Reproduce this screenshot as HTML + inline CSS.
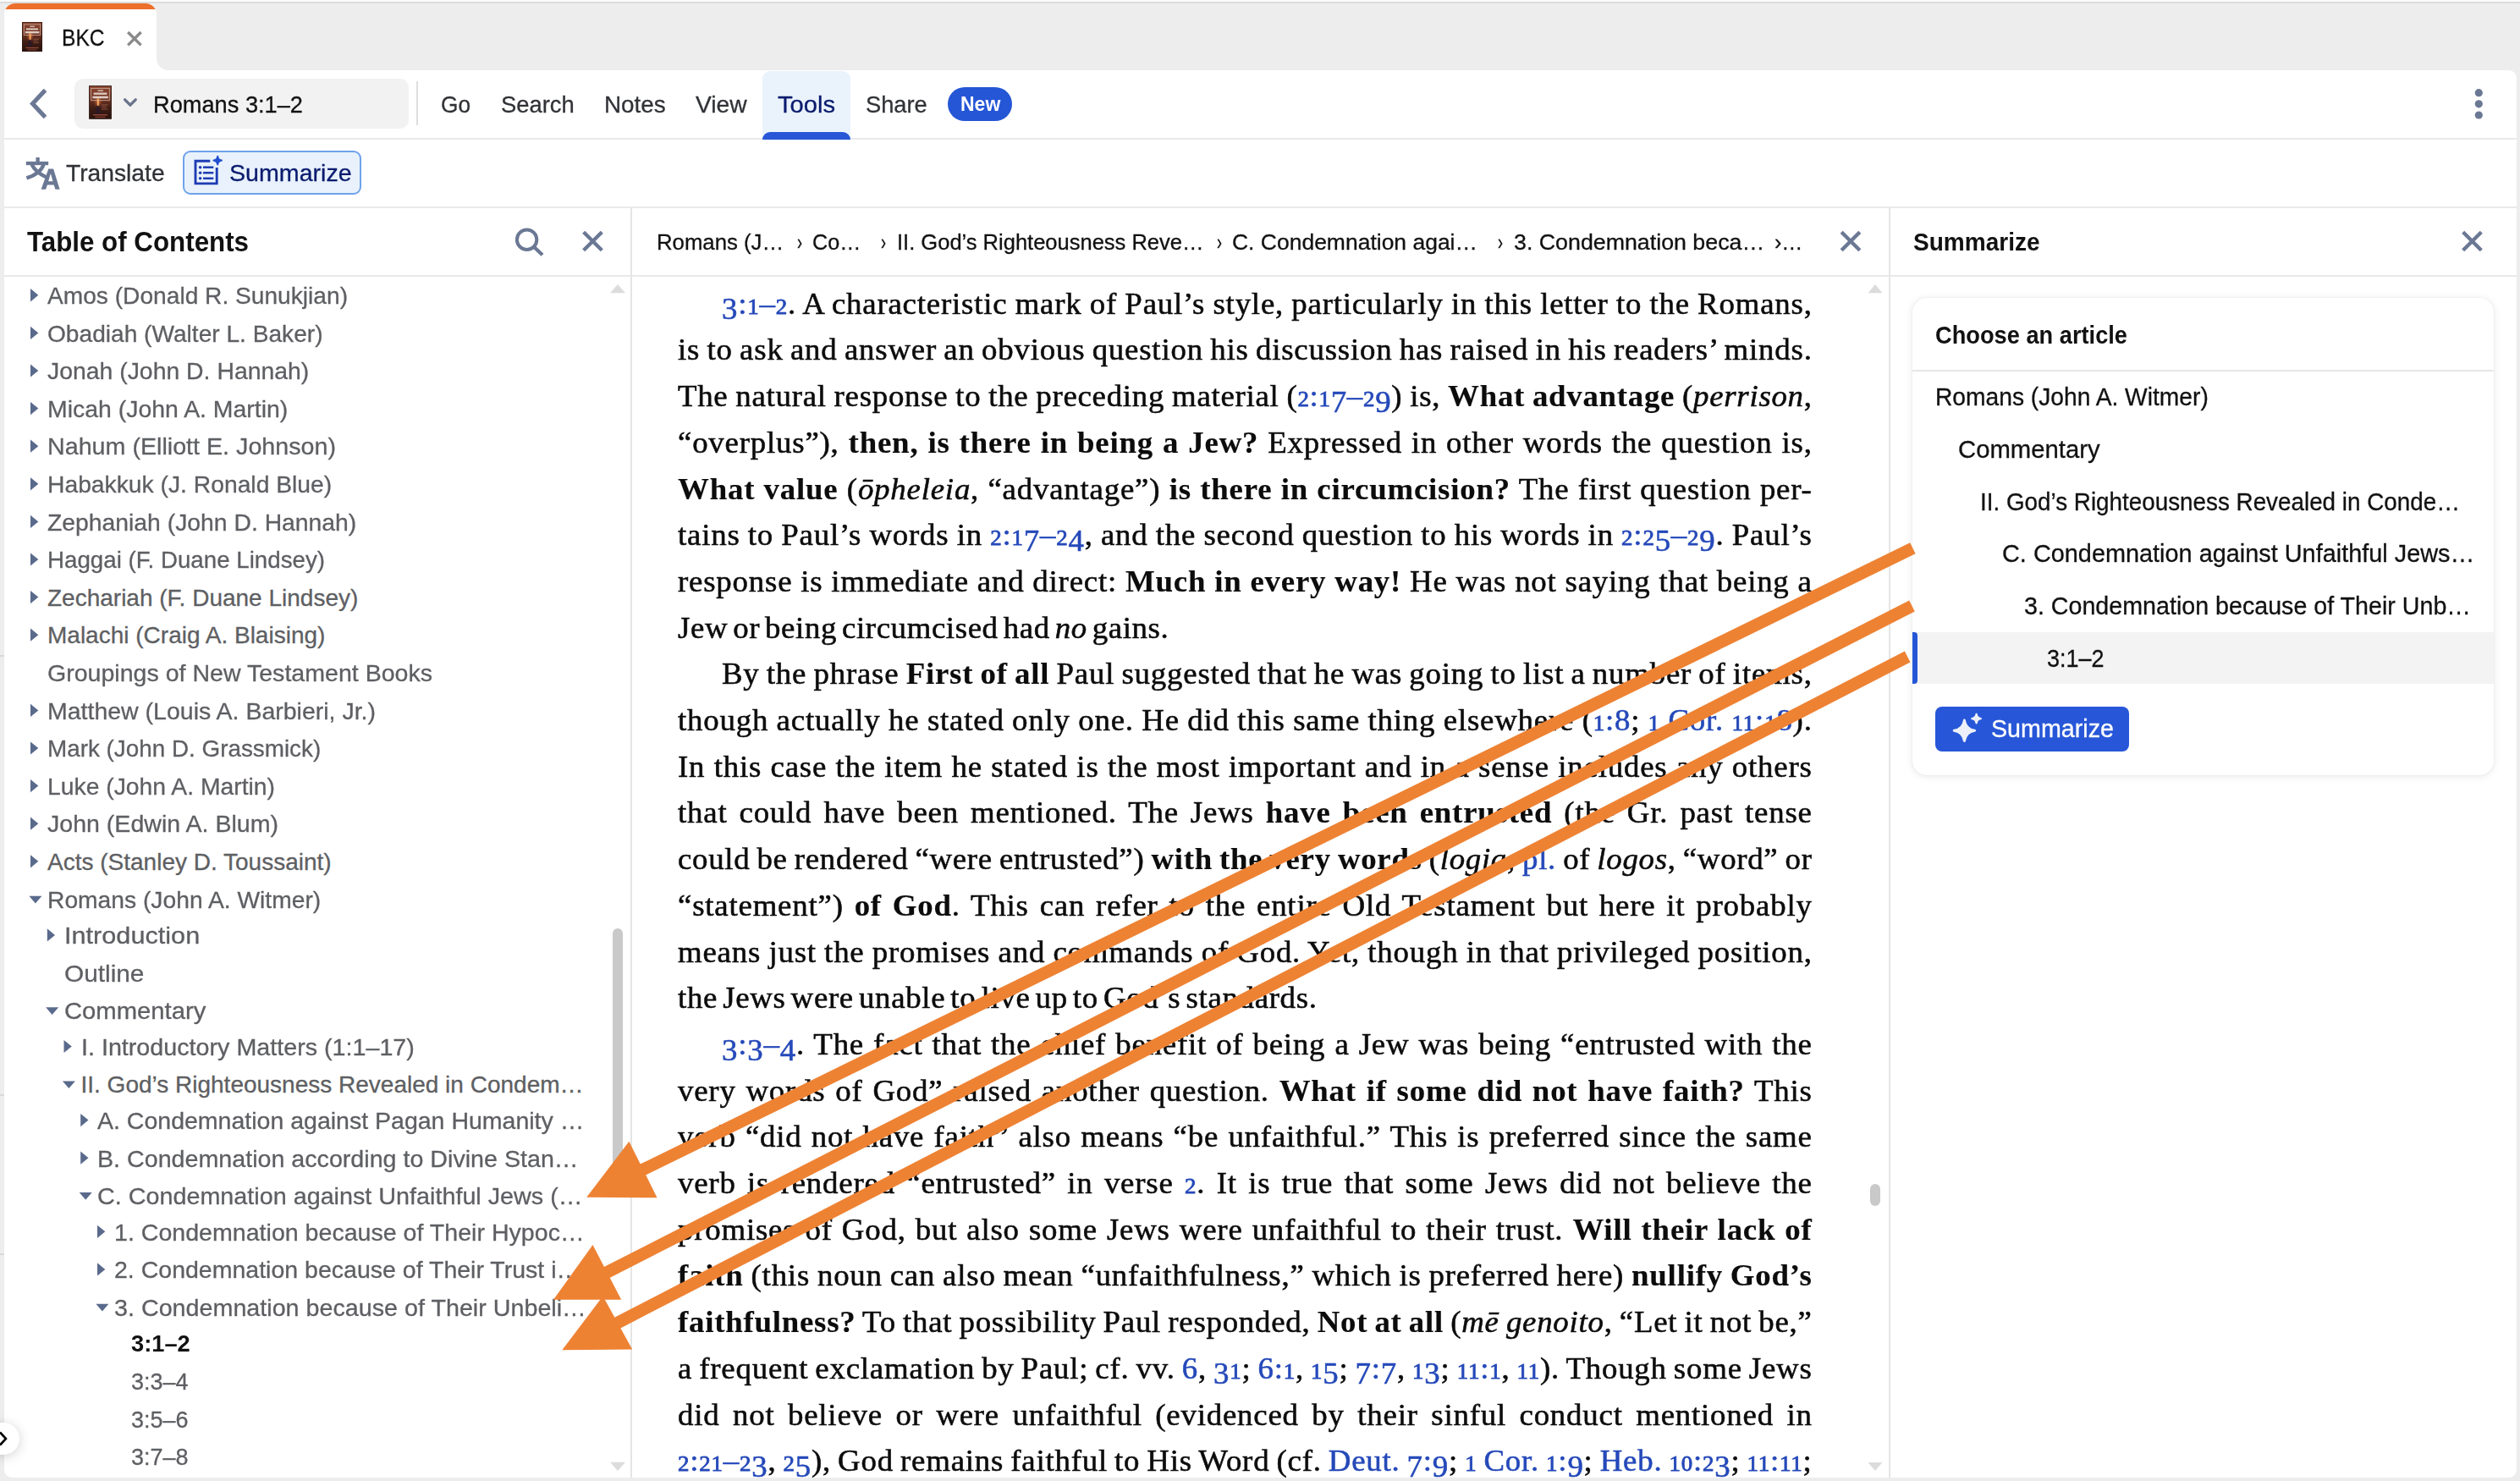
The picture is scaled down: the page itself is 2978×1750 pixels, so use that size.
<!DOCTYPE html><html><head><meta charset="utf-8"><title>BKC</title><style>

*{box-sizing:border-box;margin:0;padding:0}
html,body{width:2978px;height:1750px;overflow:hidden;background:#ededed;font-family:"Liberation Sans",sans-serif}
.abs{position:absolute}
.t{position:absolute;white-space:pre;line-height:1;transform-origin:0 0;-webkit-text-stroke:0.3px currentColor}
.t.b{-webkit-text-stroke:0}
.ln{position:absolute;white-space:nowrap;line-height:1;font-family:"Liberation Serif",serif;color:#0c0c0c;transform-origin:0 0;text-align:justify;text-align-last:justify;-webkit-text-stroke:0.55px currentColor}
.ln.last{text-align:left;text-align-last:left}
.ln a{color:#2549b9}
.ln .s{font-size:0.73em;-webkit-text-stroke:0.8px currentColor}
.ln .p{position:relative;top:0.19em}
.ln b{font-weight:700;-webkit-text-stroke:0.15px currentColor}
svg{position:absolute;left:0;top:0;overflow:visible}

#root{position:absolute;left:0;top:0;width:2978px;height:1750px;overflow:hidden;background:#ededed}
</style></head><body><div id="root">
<div class="abs" style="left:0;top:0;width:2978px;height:2px;background:#fbfbfb"></div>
<div class="abs" style="left:0;top:2px;width:2978px;height:2px;background:#dcdcdc"></div>
<div class="abs" style="left:5px;top:82.5px;width:2969px;height:1663.5px;background:#fff;border-radius:0 9px 9px 9px"></div>
<div class="abs" style="left:5px;top:4px;width:180px;height:80px;background:#fff;border-radius:13px 13px 0 0;overflow:hidden"><div style="height:7px;background:#ec6f2b"></div></div>
<div class="abs" style="left:185px;top:69px;width:14px;height:14px;background:radial-gradient(circle at 100% 0,#ededed 13.5px,#fff 14.5px)"></div>
<div class="abs" style="left:5px;top:163px;width:2969px;height:2px;background:#e9e9e9"></div>
<div class="abs" style="left:5px;top:244px;width:2969px;height:2px;background:#e9e9e9"></div>
<div class="abs" style="left:5px;top:325px;width:2969px;height:2px;background:#e9e9e9"></div>
<div class="abs" style="left:745px;top:246px;width:2px;height:1500px;background:#e5e5e5"></div>
<div class="abs" style="left:2232px;top:246px;width:2px;height:1500px;background:#e5e5e5"></div>
<div class="abs" style="left:88px;top:93px;width:395px;height:59px;background:#f2f2f2;border-radius:10px"></div>
<div class="abs" style="left:492px;top:96px;width:2px;height:52px;background:#dedede"></div>
<div class="abs" style="left:901px;top:83.5px;width:104px;height:80.5px;background:#eaf3fc;border-radius:9px 9px 0 0"></div>
<div class="abs" style="left:901px;top:156px;width:104px;height:8.8px;background:#2757d6;border-radius:9px 9px 0 0"></div>
<div class="abs" style="left:1119.5px;top:103px;width:76.5px;height:40px;background:#2456d6;border-radius:20px"></div>
<div class="abs" style="left:216px;top:178px;width:211px;height:52px;background:#e9f2fc;border:2.5px solid #6ea2ea;border-radius:9px"></div>
<div class="abs" style="left:2260px;top:352px;width:687px;height:563.5px;background:#fff;border-radius:17px;box-shadow:0 1px 10px rgba(0,0,0,.10),0 0 2px rgba(0,0,0,.06);overflow:hidden"><div class="abs" style="left:0;top:84.5px;width:687px;height:2px;background:#e6e6e6"></div><div class="abs" style="left:0;top:395px;width:687px;height:60.5px;background:#f3f3f3"></div><div class="abs" style="left:0;top:395px;width:6px;height:60.5px;background:#2456d6;border-radius:0 4px 4px 0"></div><div class="abs" style="left:27px;top:483px;width:229px;height:52.5px;background:#2757d8;border-radius:8px"></div></div>
<div class="abs" style="left:724.3px;top:1097px;width:11.5px;height:300px;background:#c9c9c9;border-radius:6px"></div>
<div class="abs" style="left:2210px;top:1398.7px;width:12px;height:26.5px;background:#c9c9c9;border-radius:6px"></div>
<div class="abs" style="left:-16px;top:1680.5px;width:38.5px;height:38.5px;background:#fff;border-radius:50%;box-shadow:0 2px 14px rgba(0,0,0,.18)"></div>
<div class="abs" style="left:0;top:774px;width:5px;height:2px;background:#d9d9d9"></div>
<div class="abs" style="left:0;top:1293px;width:5px;height:2px;background:#d9d9d9"></div>
<div class="abs" style="left:0;top:1481px;width:5px;height:2px;background:#d9d9d9"></div>
<svg width="2978" height="1750" viewBox="0 0 2978 1750"><defs><linearGradient id="bkg" x1="0" y1="0" x2="0" y2="1"><stop offset="0" stop-color="#8c4630"/><stop offset="0.42" stop-color="#6a3020"/><stop offset="0.7" stop-color="#3c1c14"/><stop offset="1" stop-color="#2c140e"/></linearGradient><radialGradient id="bkglow"><stop offset="0" stop-color="#f08a48" stop-opacity=".85"/><stop offset="1" stop-color="#b04a28" stop-opacity="0"/></radialGradient><filter id="bl" x="-10%" y="-10%" width="120%" height="120%"><feGaussianBlur stdDeviation="0.45"/></filter></defs><g transform="translate(26,26) scale(0.8889,0.8750)"><rect width="27" height="40" fill="#2b1610"/><rect x="0.8" y="0.8" width="25.4" height="38.4" fill="url(#bkg)"/><ellipse cx="10.8" cy="19" rx="5.5" ry="8" fill="url(#bkglow)"/><g filter="url(#bl)"><rect x="2.6" y="3.3" width="21.8" height="14.4" fill="none" stroke="#c7a696" stroke-width="0.9"/><rect x="10.5" y="5.2" width="6.5" height="1.7" fill="#d9c3b5" fill-opacity=".85"/><rect x="5.5" y="8.4" width="16" height="2.5" fill="#efe4dc" fill-opacity=".82"/><rect x="4.3" y="12.6" width="18.6" height="2.7" fill="#f2e9e2" fill-opacity=".85"/><rect x="9.9" y="15.6" width="1.8" height="8.2" fill="#f6b06a"/><path d="M7 33.5 L8.3 25.5 Q10.6 22.8 12.8 25.5 L14.3 33.5 Z" fill="#2d1a26" fill-opacity=".8"/><rect x="15" y="22.6" width="7.5" height="1" fill="#9b5b48"/><rect x="15" y="25" width="6" height="1" fill="#8f5140"/><rect x="15" y="27.6" width="7.4" height="1" fill="#8f5140"/><rect x="5" y="34.2" width="17" height="1.4" fill="#96483a"/><rect x="7.5" y="36.9" width="12" height="1.3" fill="#833f30"/></g></g><g transform="translate(105.1,101.1) scale(0.9926,0.9925)"><rect width="27" height="40" fill="#2b1610"/><rect x="0.8" y="0.8" width="25.4" height="38.4" fill="url(#bkg)"/><ellipse cx="10.8" cy="19" rx="5.5" ry="8" fill="url(#bkglow)"/><g filter="url(#bl)"><rect x="2.6" y="3.3" width="21.8" height="14.4" fill="none" stroke="#c7a696" stroke-width="0.9"/><rect x="10.5" y="5.2" width="6.5" height="1.7" fill="#d9c3b5" fill-opacity=".85"/><rect x="5.5" y="8.4" width="16" height="2.5" fill="#efe4dc" fill-opacity=".82"/><rect x="4.3" y="12.6" width="18.6" height="2.7" fill="#f2e9e2" fill-opacity=".85"/><rect x="9.9" y="15.6" width="1.8" height="8.2" fill="#f6b06a"/><path d="M7 33.5 L8.3 25.5 Q10.6 22.8 12.8 25.5 L14.3 33.5 Z" fill="#2d1a26" fill-opacity=".8"/><rect x="15" y="22.6" width="7.5" height="1" fill="#9b5b48"/><rect x="15" y="25" width="6" height="1" fill="#8f5140"/><rect x="15" y="27.6" width="7.4" height="1" fill="#8f5140"/><rect x="5" y="34.2" width="17" height="1.4" fill="#96483a"/><rect x="7.5" y="36.9" width="12" height="1.3" fill="#833f30"/></g></g><path d="M151.2 38 L166.6 53.4 M166.6 38 L151.2 53.4" stroke="#8a8a8a" stroke-width="3.4" fill="none"/><path d="M53.5 106.5 L38.5 122.5 L53.5 138.5" stroke="#6b7894" stroke-width="5.1" fill="none"/><path d="M147.6 117.8 L153.9 124.2 L160.2 117.8" stroke="#69748a" stroke-width="3.3" fill="none" stroke-linecap="round" stroke-linejoin="round"/><circle cx="2929.3" cy="109.7" r="4.6" fill="#6b7894"/><circle cx="2929.3" cy="122.8" r="4.6" fill="#6b7894"/><circle cx="2929.3" cy="136" r="4.6" fill="#6b7894"/><g stroke="#6b7894" fill="none" stroke-width="4.3"><path d="M30.8 193 H57.2"/><path d="M44.6 186 V193"/><path d="M37.6 194.5 Q42 203.5 54.6 209.4"/><path d="M51.6 194.5 Q47.5 205.5 31.4 210.4"/></g><path d="M48.6 223.8 L57.3 199.5 H63.1 L70.6 223.8 H65.4 L63.7 218.4 H55.9 L54.1 223.8 Z M57.1 214.3 H62.5 L59.9 205 Z" fill="#6b7894" fill-rule="evenodd"/><path d="M248.3 190.2 H231 V216.9 H256.2 V198" stroke="#1f3cb2" stroke-width="2.9" fill="none"/><circle cx="236.6" cy="197.7" r="1.8" fill="#1f3cb2"/><path d="M240 197.7 H252.3" stroke="#1f3cb2" stroke-width="2.5"/><circle cx="236.6" cy="204.2" r="1.8" fill="#1f3cb2"/><path d="M240 204.2 H252.3" stroke="#1f3cb2" stroke-width="2.5"/><circle cx="236.6" cy="210.8" r="1.8" fill="#1f3cb2"/><path d="M240 210.8 H252.3" stroke="#1f3cb2" stroke-width="2.5"/><path d="M257.2 184.79999999999998 Q257.82 188.98 262.0 189.6 Q257.82 190.22 257.2 194.4 Q256.58 190.22 252.39999999999998 189.6 Q256.58 188.98 257.2 184.79999999999998 Z" fill="#2350d0" stroke="#2350d0" stroke-width="2.0" stroke-linejoin="round"/><circle cx="622.6" cy="283.2" r="11.7" stroke="#6b7894" stroke-width="4" fill="none"/><path d="M631 291.8 L641 301.3" stroke="#6b7894" stroke-width="4.3"/><path d="M689.7 274.2 L711.3 295.8 M711.3 274.2 L689.7 295.8" stroke="#6b7894" stroke-width="4.4" fill="none"/><path d="M2176.2 274.2 L2197.8 295.8 M2197.8 274.2 L2176.2 295.8" stroke="#6b7894" stroke-width="4.4" fill="none"/><path d="M2910.7 274.2 L2932.3 295.8 M2932.3 274.2 L2910.7 295.8" stroke="#6b7894" stroke-width="4.4" fill="none"/><g fill="#dcdcdc"><polygon points="721,346.3 739,346.3 730,336"/><polygon points="721,1727.7 739,1727.7 730,1738"/><polygon points="2207.5,346.3 2224.5,346.3 2216,336"/><polygon points="2207.5,1728 2224.5,1728 2216,1738"/></g><g fill="#5a6a8c"><polygon points="36.0,341.1 45.3,348.8 36.0,356.4"/><polygon points="36.0,385.8 45.3,393.4 36.0,401.0"/><polygon points="36.0,430.4 45.3,438.0 36.0,445.6"/><polygon points="36.0,475.0 45.3,482.6 36.0,490.2"/><polygon points="36.0,519.6 45.3,527.2 36.0,534.8"/><polygon points="36.0,564.2 45.3,571.8 36.0,579.4"/><polygon points="36.0,608.8 45.3,616.4 36.0,624.0"/><polygon points="36.0,653.4 45.3,661.0 36.0,668.6"/><polygon points="36.0,698.0 45.3,705.6 36.0,713.2"/><polygon points="36.0,742.6 45.3,750.2 36.0,757.8"/><polygon points="36.0,831.8 45.3,839.4 36.0,847.0"/><polygon points="36.0,876.4 45.3,884.0 36.0,891.6"/><polygon points="36.0,921.0 45.3,928.6 36.0,936.2"/><polygon points="36.0,965.6 45.3,973.2 36.0,980.8"/><polygon points="36.0,1010.2 45.3,1017.8 36.0,1025.4"/><polygon points="34.4,1058.7 49.4,1058.7 41.9,1067.4"/><polygon points="55.8,1097.3 65.0,1104.9 55.8,1112.5"/><polygon points="54.1,1190.3 69.2,1190.3 61.6,1199.0"/><polygon points="75.5,1229.0 84.8,1236.5 75.5,1244.1"/><polygon points="73.9,1277.4 88.9,1277.4 81.4,1286.1"/><polygon points="95.2,1316.0 104.5,1323.6 95.2,1331.2"/><polygon points="95.2,1360.6 104.5,1368.2 95.2,1375.8"/><polygon points="93.7,1409.1 108.7,1409.1 101.2,1417.8"/><polygon points="115.0,1447.7 124.3,1455.3 115.0,1462.9"/><polygon points="115.0,1492.3 124.3,1499.9 115.0,1507.5"/><polygon points="113.4,1540.8 128.4,1540.8 120.9,1549.5"/></g><path d="M2321.4 851.0999999999999 Q2322.99 861.71 2333.6 863.3 Q2322.99 864.89 2321.4 875.5 Q2319.81 864.89 2309.2000000000003 863.3 Q2319.81 861.71 2321.4 851.0999999999999 Z" fill="#eceff9" stroke="#eceff9" stroke-width="3.0" stroke-linejoin="round"/><path d="M2335.6 843.9 Q2336.28 848.42 2340.7999999999997 849.1 Q2336.28 849.78 2335.6 854.3000000000001 Q2334.92 849.78 2330.4 849.1 Q2334.92 848.42 2335.6 843.9 Z" fill="#eceff9" stroke="#eceff9" stroke-width="2.4" stroke-linejoin="round"/><path d="M0 1692.5 L7 1700 L0 1707.5" stroke="#000" stroke-width="2.6" fill="none"/></svg>
<span class="t" id="t0" style="left:73.0px;top:30.7px;font-size:28px;font-weight:400;color:#111;transform:scaleX(0.8771);">BKC</span>
<span class="t" id="t1" style="left:181.0px;top:110.3px;font-size:28px;font-weight:400;color:#111;transform:scaleX(0.9719);">Romans 3:1–2</span>
<span class="t" id="t2" style="left:520.8px;top:110.3px;font-size:28px;font-weight:400;color:#303236;transform:scaleX(0.9368);">Go</span>
<span class="t" id="t3" style="left:591.6px;top:110.3px;font-size:28px;font-weight:400;color:#303236;transform:scaleX(0.9772);">Search</span>
<span class="t" id="t4" style="left:714.4px;top:110.3px;font-size:28px;font-weight:400;color:#303236;transform:scaleX(0.9951);">Notes</span>
<span class="t" id="t5" style="left:822.3px;top:110.3px;font-size:28px;font-weight:400;color:#303236;transform:scaleX(1.0085);">View</span>
<span class="t" id="t6" style="left:918.8px;top:110.3px;font-size:28px;font-weight:400;color:#0b1b6e;transform:scaleX(1.0417);">Tools</span>
<span class="t" id="t7" style="left:1022.7px;top:110.3px;font-size:28px;font-weight:400;color:#303236;transform:scaleX(0.9743);">Share</span>
<span class="t b" id="t8" style="left:1134.6px;top:111.3px;font-size:24px;font-weight:700;color:#fff;transform:scaleX(0.9583);">New</span>
<span class="t" id="t9" style="left:78.3px;top:190.9px;font-size:28px;font-weight:400;color:#303236;transform:scaleX(1.0079);">Translate</span>
<span class="t" id="t10" style="left:270.8px;top:190.9px;font-size:28px;font-weight:400;color:#0b1b6e;transform:scaleX(1.0219);">Summarize</span>
<span class="t b" id="t11" style="left:32.0px;top:267.9px;font-size:34px;font-weight:700;color:#111;transform:scaleX(0.9206);">Table of Contents</span>
<span class="t" id="t12" style="left:776.2px;top:272.9px;font-size:26px;font-weight:400;color:#111;transform:scaleX(0.9901);">Romans (J…</span>
<span class="t" id="t13" style="left:941.5px;top:272.9px;font-size:26px;font-weight:400;color:#111;transform:scaleX(0.6919);">›</span>
<span class="t" id="t14" style="left:959.6px;top:272.9px;font-size:26px;font-weight:400;color:#111;transform:scaleX(0.9671);">Co…</span>
<span class="t" id="t15" style="left:1041.0px;top:272.9px;font-size:26px;font-weight:400;color:#111;transform:scaleX(0.6919);">›</span>
<span class="t" id="t16" style="left:1059.7px;top:272.9px;font-size:26px;font-weight:400;color:#111;transform:scaleX(0.9811);">II. God’s Righteousness Reve…</span>
<span class="t" id="t17" style="left:1438.2px;top:272.9px;font-size:26px;font-weight:400;color:#111;transform:scaleX(0.6919);">›</span>
<span class="t" id="t18" style="left:1456.3px;top:272.9px;font-size:26px;font-weight:400;color:#111;transform:scaleX(1.0185);">C. Condemnation agai…</span>
<span class="t" id="t19" style="left:1769.8px;top:272.9px;font-size:26px;font-weight:400;color:#111;transform:scaleX(0.6919);">›</span>
<span class="t" id="t20" style="left:1788.6px;top:272.9px;font-size:26px;font-weight:400;color:#111;transform:scaleX(1.0298);">3. Condemnation beca…</span>
<span class="t" id="t21" style="left:2097.0px;top:272.9px;font-size:26px;font-weight:400;color:#111;transform:scaleX(0.9662);">›…</span>
<span class="t b" id="t22" style="left:2260.7px;top:270.8px;font-size:30px;font-weight:700;color:#111;transform:scaleX(0.9345);">Summarize</span>
<span class="t" id="t23" style="left:56.0px;top:336.0px;font-size:28px;font-weight:400;color:#5e5f63;transform:scaleX(1.0049);">Amos (Donald R. Sunukjian)</span>
<span class="t" id="t24" style="left:56.0px;top:380.6px;font-size:28px;font-weight:400;color:#5e5f63;transform:scaleX(1.0040);">Obadiah (Walter L. Baker)</span>
<span class="t" id="t25" style="left:56.0px;top:425.2px;font-size:28px;font-weight:400;color:#5e5f63;transform:scaleX(1.0138);">Jonah (John D. Hannah)</span>
<span class="t" id="t26" style="left:56.0px;top:469.8px;font-size:28px;font-weight:400;color:#5e5f63;transform:scaleX(1.0150);">Micah (John A. Martin)</span>
<span class="t" id="t27" style="left:56.0px;top:514.4px;font-size:28px;font-weight:400;color:#5e5f63;transform:scaleX(1.0239);">Nahum (Elliott E. Johnson)</span>
<span class="t" id="t28" style="left:56.0px;top:559.0px;font-size:28px;font-weight:400;color:#5e5f63;transform:scaleX(1.0095);">Habakkuk (J. Ronald Blue)</span>
<span class="t" id="t29" style="left:56.0px;top:603.6px;font-size:28px;font-weight:400;color:#5e5f63;transform:scaleX(1.0116);">Zephaniah (John D. Hannah)</span>
<span class="t" id="t30" style="left:56.0px;top:648.2px;font-size:28px;font-weight:400;color:#5e5f63;transform:scaleX(0.9894);">Haggai (F. Duane Lindsey)</span>
<span class="t" id="t31" style="left:56.0px;top:692.8px;font-size:28px;font-weight:400;color:#5e5f63;">Zechariah (F. Duane Lindsey)</span>
<span class="t" id="t32" style="left:56.0px;top:737.4px;font-size:28px;font-weight:400;color:#5e5f63;">Malachi (Craig A. Blaising)</span>
<span class="t" id="t33" style="left:56.0px;top:782.0px;font-size:28px;font-weight:400;color:#5e5f63;transform:scaleX(1.0198);">Groupings of New Testament Books</span>
<span class="t" id="t34" style="left:56.0px;top:826.6px;font-size:28px;font-weight:400;color:#5e5f63;transform:scaleX(1.0177);">Matthew (Louis A. Barbieri, Jr.)</span>
<span class="t" id="t35" style="left:56.0px;top:871.2px;font-size:28px;font-weight:400;color:#5e5f63;transform:scaleX(0.9940);">Mark (John D. Grassmick)</span>
<span class="t" id="t36" style="left:56.0px;top:915.8px;font-size:28px;font-weight:400;color:#5e5f63;transform:scaleX(1.0108);">Luke (John A. Martin)</span>
<span class="t" id="t37" style="left:56.0px;top:960.4px;font-size:28px;font-weight:400;color:#5e5f63;transform:scaleX(1.0199);">John (Edwin A. Blum)</span>
<span class="t" id="t38" style="left:56.0px;top:1005.0px;font-size:28px;font-weight:400;color:#5e5f63;">Acts (Stanley D. Toussaint)</span>
<span class="t" id="t39" style="left:56.0px;top:1049.6px;font-size:28px;font-weight:400;color:#5e5f63;transform:scaleX(1.0083);">Romans (John A. Witmer)</span>
<span class="t" id="t40" style="left:75.8px;top:1092.1px;font-size:28px;font-weight:400;color:#5e5f63;transform:scaleX(1.0951);">Introduction</span>
<span class="t" id="t41" style="left:75.8px;top:1136.7px;font-size:28px;font-weight:400;color:#5e5f63;transform:scaleX(1.0646);">Outline</span>
<span class="t" id="t42" style="left:75.8px;top:1181.3px;font-size:28px;font-weight:400;color:#5e5f63;transform:scaleX(1.0436);">Commentary</span>
<span class="t" id="t43" style="left:95.5px;top:1223.8px;font-size:28px;font-weight:400;color:#5e5f63;transform:scaleX(1.0247);">I. Introductory Matters (1:1–17)</span>
<span class="t" id="t44" style="left:95.5px;top:1268.4px;font-size:28px;font-weight:400;color:#5e5f63;">II. God’s Righteousness Revealed in Condem…</span>
<span class="t" id="t45" style="left:115.2px;top:1310.9px;font-size:28px;font-weight:400;color:#5e5f63;transform:scaleX(1.0181);">A. Condemnation against Pagan Humanity …</span>
<span class="t" id="t46" style="left:115.2px;top:1355.5px;font-size:28px;font-weight:400;color:#5e5f63;transform:scaleX(1.0231);">B. Condemnation according to Divine Stan…</span>
<span class="t" id="t47" style="left:115.2px;top:1400.1px;font-size:28px;font-weight:400;color:#5e5f63;transform:scaleX(1.0265);">C. Condemnation against Unfaithful Jews (…</span>
<span class="t" id="t48" style="left:135.0px;top:1442.6px;font-size:28px;font-weight:400;color:#5e5f63;transform:scaleX(1.0207);">1. Condemnation because of Their Hypoc…</span>
<span class="t" id="t49" style="left:135.0px;top:1487.2px;font-size:28px;font-weight:400;color:#5e5f63;transform:scaleX(1.0183);">2. Condemnation because of Their Trust i…</span>
<span class="t" id="t50" style="left:135.0px;top:1531.8px;font-size:28px;font-weight:400;color:#5e5f63;transform:scaleX(1.0249);">3. Condemnation because of Their Unbeli…</span>
<span class="t b" id="t51" style="left:154.8px;top:1574.3px;font-size:28px;font-weight:700;color:#111;transform:scaleX(0.9738);">3:1–2</span>
<span class="t" id="t52" style="left:154.8px;top:1618.9px;font-size:28px;font-weight:400;color:#5e5f63;transform:scaleX(0.9625);">3:3–4</span>
<span class="t" id="t53" style="left:154.8px;top:1663.5px;font-size:28px;font-weight:400;color:#5e5f63;transform:scaleX(0.9625);">3:5–6</span>
<span class="t" id="t54" style="left:154.8px;top:1708.1px;font-size:28px;font-weight:400;color:#5e5f63;transform:scaleX(0.9625);">3:7–8</span>
<span class="t b" id="t55" style="left:2287.0px;top:381.0px;font-size:30px;font-weight:700;color:#111;transform:scaleX(0.9077);">Choose an article</span>
<span class="t" id="t56" style="left:2287.0px;top:455.4px;font-size:29px;font-weight:400;color:#111;transform:scaleX(0.9723);">Romans (John A. Witmer)</span>
<span class="t" id="t57" style="left:2313.8px;top:517.2px;font-size:29px;font-weight:400;color:#111;transform:scaleX(1.0102);">Commentary</span>
<span class="t" id="t58" style="left:2340.0px;top:578.5px;font-size:29px;font-weight:400;color:#111;transform:scaleX(0.9592);">II. God’s Righteousness Revealed in Conde…</span>
<span class="t" id="t59" style="left:2366.0px;top:640.4px;font-size:29px;font-weight:400;color:#111;transform:scaleX(0.9954);">C. Condemnation against Unfaithful Jews…</span>
<span class="t" id="t60" style="left:2392.0px;top:701.7px;font-size:29px;font-weight:400;color:#111;transform:scaleX(0.9875);">3. Condemnation because of Their Unb…</span>
<span class="t" id="t61" style="left:2418.8px;top:763.5px;font-size:29px;font-weight:400;color:#111;transform:scaleX(0.9287);">3:1–2</span>
<span class="t" id="t62" style="left:2353.0px;top:847.4px;font-size:29px;font-weight:400;color:#fff;transform:scaleX(0.9887);">Summarize</span>
<div class="ln" style="left:853.3px;top:341.7px;width:1223.8px;font-size:35px;letter-spacing:0.75px;word-spacing:-4.2px;transform:scaleX(1.0530)"><a><span class="p">3</span>:<span class="s">1</span>–<span class="s">2</span></a>. A characteristic mark of Paul’s style, particularly in this letter to the Romans,</div>
<div class="ln" style="left:801.3px;top:396.4px;width:1273.2px;font-size:35px;letter-spacing:0.75px;word-spacing:-4.2px;transform:scaleX(1.0530)">is to ask and answer an obvious question his discussion has raised in his readers’ minds.</div>
<div class="ln" style="left:801.3px;top:451.1px;width:1273.2px;font-size:35px;letter-spacing:0.68px;word-spacing:-4.2px;transform:scaleX(1.0530)">The natural response to the preceding material (<a><span class="s">2</span>:<span class="s">1</span><span class="p">7</span>–<span class="s">2</span><span class="p">9</span></a>) is, <b>What advantage</b> (<i>perrison</i>,</div>
<div class="ln" style="left:801.3px;top:505.8px;width:1273.2px;font-size:35px;letter-spacing:0.75px;word-spacing:-4.2px;transform:scaleX(1.0530)">“overplus”), <b>then, is there in being a Jew?</b> Expressed in other words the question is,</div>
<div class="ln" style="left:801.3px;top:560.5px;width:1273.2px;font-size:35px;letter-spacing:0.75px;word-spacing:-4.2px;transform:scaleX(1.0530)"><b>What value</b> (<i>ōpheleia</i>, “advantage”) <b>is there in circumcision?</b> The first question per-</div>
<div class="ln" style="left:801.3px;top:615.2px;width:1273.2px;font-size:35px;letter-spacing:0.75px;word-spacing:-4.2px;transform:scaleX(1.0530)">tains to Paul’s words in <a><span class="s">2</span>:<span class="s">1</span><span class="p">7</span>–<span class="s">2</span><span class="p">4</span></a>, and the second question to his words in <a><span class="s">2</span>:<span class="s">2</span><span class="p">5</span>–<span class="s">2</span><span class="p">9</span></a>. Paul’s</div>
<div class="ln" style="left:801.3px;top:669.9px;width:1273.2px;font-size:35px;letter-spacing:0.75px;word-spacing:-4.2px;transform:scaleX(1.0530)">response is immediate and direct: <b>Much in every way!</b> He was not saying that being a</div>
<div class="ln last" style="left:801.3px;top:724.6px;width:1273.2px;font-size:35px;letter-spacing:0.57px;word-spacing:-3.6px;transform:scaleX(1.0530)">Jew or being circumcised had <i>no</i> gains.</div>
<div class="ln" style="left:853.3px;top:779.3px;width:1223.8px;font-size:35px;letter-spacing:0.75px;word-spacing:-4.2px;transform:scaleX(1.0530)">By the phrase <b>First of all</b> Paul suggested that he was going to list a number of items,</div>
<div class="ln" style="left:801.3px;top:834.0px;width:1273.2px;font-size:35px;letter-spacing:0.75px;word-spacing:-4.2px;transform:scaleX(1.0530)">though actually he stated only one. He did this same thing elsewhere (<a><span class="s">1</span>:8</a>; <a><span class="s">1</span> Cor. <span class="s">1</span><span class="s">1</span>:<span class="s">1</span>8</a>).</div>
<div class="ln" style="left:801.3px;top:888.7px;width:1273.2px;font-size:35px;letter-spacing:0.75px;word-spacing:-4.2px;transform:scaleX(1.0530)">In this case the item he stated is the most important and in a sense includes any others</div>
<div class="ln" style="left:801.3px;top:943.4px;width:1273.2px;font-size:35px;letter-spacing:0.75px;word-spacing:-4.2px;transform:scaleX(1.0530)">that could have been mentioned. The Jews <b>have been entrusted</b> (the Gr. past tense</div>
<div class="ln" style="left:801.3px;top:998.1px;width:1273.2px;font-size:35px;letter-spacing:0.66px;word-spacing:-4.2px;transform:scaleX(1.0530)">could be rendered “were entrusted”) <b>with the very words</b> (<i>logia</i>, <a>pl.</a> of <i>logos</i>, “word” or</div>
<div class="ln" style="left:801.3px;top:1052.8px;width:1273.2px;font-size:35px;letter-spacing:0.75px;word-spacing:-4.2px;transform:scaleX(1.0530)">“statement”) <b>of God</b>. This can refer to the entire Old Testament but here it probably</div>
<div class="ln" style="left:801.3px;top:1107.5px;width:1273.2px;font-size:35px;letter-spacing:0.75px;word-spacing:-4.2px;transform:scaleX(1.0530)">means just the promises and commands of God. Yet, though in that privileged position,</div>
<div class="ln last" style="left:801.3px;top:1162.2px;width:1273.2px;font-size:35px;letter-spacing:0.64px;word-spacing:-3.6px;transform:scaleX(1.0530)">the Jews were unable to live up to God’s standards.</div>
<div class="ln" style="left:853.3px;top:1216.9px;width:1223.8px;font-size:35px;letter-spacing:0.75px;word-spacing:-4.2px;transform:scaleX(1.0530)"><a><span class="p">3</span>:<span class="p">3</span>–<span class="p">4</span></a>. The fact that the chief benefit of being a Jew was being “entrusted with the</div>
<div class="ln" style="left:801.3px;top:1271.6px;width:1273.2px;font-size:35px;letter-spacing:0.75px;word-spacing:-4.2px;transform:scaleX(1.0530)">very words of God” raised another question. <b>What if some did not have faith?</b> This</div>
<div class="ln" style="left:801.3px;top:1326.3px;width:1273.2px;font-size:35px;letter-spacing:0.75px;word-spacing:-4.2px;transform:scaleX(1.0530)">verb “did not have faith” also means “be unfaithful.” This is preferred since the same</div>
<div class="ln" style="left:801.3px;top:1381.0px;width:1273.2px;font-size:35px;letter-spacing:0.75px;word-spacing:-4.2px;transform:scaleX(1.0530)">verb is rendered “entrusted” in verse <a><span class="s">2</span></a>. It is true that some Jews did not believe the</div>
<div class="ln" style="left:801.3px;top:1435.7px;width:1273.2px;font-size:35px;letter-spacing:0.75px;word-spacing:-4.2px;transform:scaleX(1.0530)">promises of God, but also some Jews were unfaithful to their trust. <b>Will their lack of</b></div>
<div class="ln" style="left:801.3px;top:1490.4px;width:1273.2px;font-size:35px;letter-spacing:0.75px;word-spacing:-4.2px;transform:scaleX(1.0530)"><b>faith</b> (this noun can also mean “unfaithfulness,” which is preferred here) <b>nullify God’s</b></div>
<div class="ln" style="left:801.3px;top:1545.1px;width:1273.2px;font-size:35px;letter-spacing:0.71px;word-spacing:-4.2px;transform:scaleX(1.0530)"><b>faithfulness?</b> To that possibility Paul responded, <b>Not at all</b> (<i>mē genoito</i>, “Let it not be,”</div>
<div class="ln" style="left:801.3px;top:1599.8px;width:1273.2px;font-size:35px;letter-spacing:0.75px;word-spacing:-4.2px;transform:scaleX(1.0530)">a frequent exclamation by Paul; cf. vv. <a>6</a>, <a><span class="p">3</span><span class="s">1</span></a>; <a>6:<span class="s">1</span></a>, <a><span class="s">1</span><span class="p">5</span></a>; <a><span class="p">7</span>:<span class="p">7</span></a>, <a><span class="s">1</span><span class="p">3</span></a>; <a><span class="s">1</span><span class="s">1</span>:<span class="s">1</span></a>, <a><span class="s">1</span><span class="s">1</span></a>). Though some Jews</div>
<div class="ln" style="left:801.3px;top:1654.5px;width:1273.2px;font-size:35px;letter-spacing:0.75px;word-spacing:-4.2px;transform:scaleX(1.0530)">did not believe or were unfaithful (evidenced by their sinful conduct mentioned in</div>
<div class="ln" style="left:801.3px;top:1709.2px;width:1273.2px;font-size:35px;letter-spacing:0.75px;word-spacing:-4.2px;transform:scaleX(1.0530)"><a><span class="s">2</span>:<span class="s">2</span><span class="s">1</span>–<span class="s">2</span><span class="p">3</span></a>, <a><span class="s">2</span><span class="p">5</span></a>), God remains faithful to His Word (cf. <a>Deut. <span class="p">7</span>:<span class="p">9</span></a>; <a><span class="s">1</span> Cor. <span class="s">1</span>:<span class="p">9</span></a>; <a>Heb. <span class="s">1</span><span class="s">0</span>:<span class="s">2</span><span class="p">3</span></a>; <a><span class="s">1</span><span class="s">1</span>:<span class="s">1</span><span class="s">1</span></a>;</div>
<svg width="2978" height="1750" viewBox="0 0 2978 1750"><g fill="#ee8233" stroke="none"><polygon points="2257.2,641.3 755.0,1376.3 761.3,1389.3 2263.6,654.3"/><polygon points="743.4,1348.7 693.2,1414.8 776.5,1415.2"/><polygon points="2256.2,709.6 712.3,1497.8 718.9,1510.7 2262.8,722.6"/><polygon points="700.5,1470.9 654,1535.8 734.2,1535.8"/><polygon points="2250.9,769.6 724.7,1557.5 731.4,1570.4 2257.5,782.4"/><polygon points="712.5,1531.5 664.3,1595.2 747.2,1594.6"/></g></svg>
</div></body></html>
